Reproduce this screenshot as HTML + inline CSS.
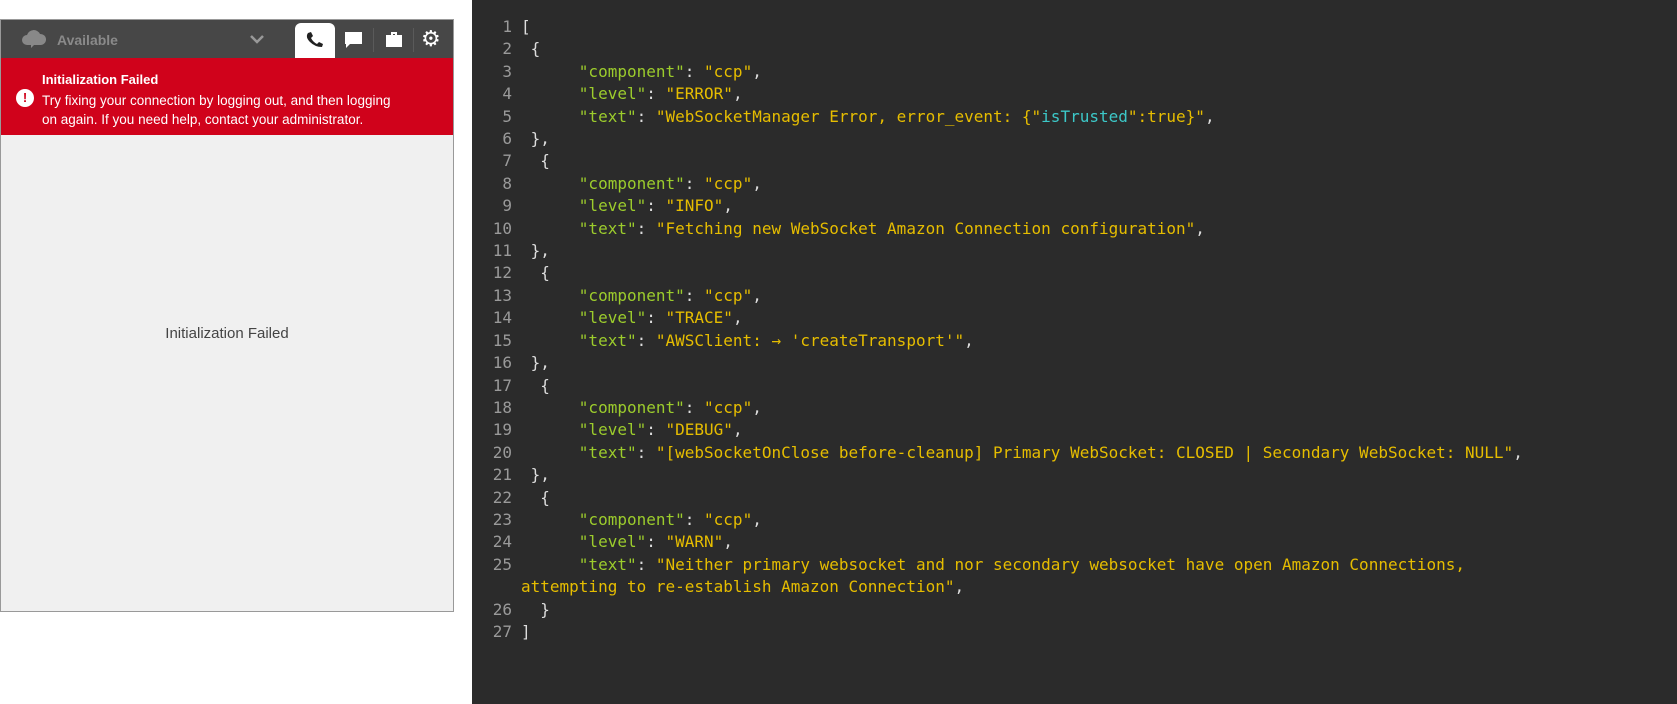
<!DOCTYPE html><html><head><style>
body{margin:0;width:1677px;height:704px;background:#fff;position:relative;overflow:hidden;font-family:"Liberation Sans",sans-serif}
.l{position:absolute;left:0;top:19px;width:452px;height:591px;border:1px solid #999;background:#f0f0f0}
.bar{position:absolute;left:0;top:0;width:452px;height:38px;background:#474747}
.red{position:absolute;left:0;top:38px;width:452px;height:77px;background:#d0021b;color:#fff}
.r{position:absolute;left:472px;top:0;width:1205px;height:704px;background:#2b2b2b}
pre{margin:0;position:absolute;left:0;top:16px;font-family:"DejaVu Sans Mono",monospace;font-size:16px;line-height:22.4px;color:#ddd}
.n{display:inline-block;width:40px;text-align:right;color:#9a9a9a;padding-right:9px}
.k{color:#9ccc2c}.v{color:#e6bd00}.c{color:#3cc8c8}
</style></head><body>
<div class="l">
<div class="bar">
<svg style="position:absolute;left:20px;top:9px" width="26" height="20" viewBox="0 0 26 20"><path d="M6 16a5 5 0 0 1 0-10 7 7 0 0 1 13-1 5 5 0 0 1 1 11H13l-3 3v-3z" fill="#888"/></svg>
<div style="position:absolute;left:56px;top:12px;font-size:14px;color:#8a8a8a;font-weight:bold">Available</div>
<svg style="position:absolute;left:248px;top:13px" width="16" height="12"><path d="M2 3l6 6 6-6" stroke="#999" stroke-width="2.5" fill="none"/></svg>
<div style="position:absolute;left:294px;top:3px;width:40px;height:35px;background:#fff;border-radius:6px 6px 0 0"></div>
<svg style="position:absolute;left:304px;top:10px" width="20" height="20" viewBox="0 0 20 20"><path d="M3 3l3-1 2 4-2 2q2 4 6 6l2-2 4 2-1 3q-7 0-12-5T3 3z" fill="#222"/></svg>
<svg style="position:absolute;left:343px;top:11px" width="20" height="18"><path d="M1 1h17v12H6l-4 4v-4H1z" fill="#fff"/></svg>
<div style="position:absolute;left:372px;top:8px;width:1px;height:24px;background:#5a5a5a"></div>
<svg style="position:absolute;left:383px;top:11px" width="20" height="18"><path d="M7 4V1h6v3h5v12H2V4zM9 4h2V3H9z" fill="#fff"/></svg>
<div style="position:absolute;left:412px;top:8px;width:1px;height:24px;background:#5a5a5a"></div>
<div style="position:absolute;left:420px;top:6px;font-size:22px;color:#fff">⚙</div>
</div>
<div class="red">
<div style="position:absolute;left:15px;top:31px;width:18px;height:18px;border-radius:50%;background:#fff;color:#d0021b;font-weight:bold;font-size:13px;text-align:center;line-height:18px">!</div>
<div style="position:absolute;left:41px;top:14px;font-size:13px;font-weight:bold">Initialization Failed</div>
<div style="position:absolute;left:41px;top:33px;font-size:13.5px;line-height:19px;width:395px">Try fixing your connection by logging out, and then logging<br>on again. If you need help, contact your administrator.</div>
</div>
<div style="position:absolute;left:0;top:305px;width:452px;text-align:center;font-size:15px;color:#444">Initialization Failed</div>
</div>
<div class="r"><pre><span class="n">1</span>[
<span class="n">2</span> {
<span class="n">3</span>      <span class="k">"component"</span>: <span class="v">"ccp"</span>,
<span class="n">4</span>      <span class="k">"level"</span>: <span class="v">"ERROR"</span>,
<span class="n">5</span>      <span class="k">"text"</span>: <span class="v">"WebSocketManager Error, error_event: {"<span class="c">isTrusted</span>":true}"</span>,
<span class="n">6</span> },
<span class="n">7</span>  {
<span class="n">8</span>      <span class="k">"component"</span>: <span class="v">"ccp"</span>,
<span class="n">9</span>      <span class="k">"level"</span>: <span class="v">"INFO"</span>,
<span class="n">10</span>      <span class="k">"text"</span>: <span class="v">"Fetching new WebSocket Amazon Connection configuration"</span>,
<span class="n">11</span> },
<span class="n">12</span>  {
<span class="n">13</span>      <span class="k">"component"</span>: <span class="v">"ccp"</span>,
<span class="n">14</span>      <span class="k">"level"</span>: <span class="v">"TRACE"</span>,
<span class="n">15</span>      <span class="k">"text"</span>: <span class="v">"AWSClient: → 'createTransport'"</span>,
<span class="n">16</span> },
<span class="n">17</span>  {
<span class="n">18</span>      <span class="k">"component"</span>: <span class="v">"ccp"</span>,
<span class="n">19</span>      <span class="k">"level"</span>: <span class="v">"DEBUG"</span>,
<span class="n">20</span>      <span class="k">"text"</span>: <span class="v">"[webSocketOnClose before-cleanup] Primary WebSocket: CLOSED | Secondary WebSocket: NULL"</span>,
<span class="n">21</span> },
<span class="n">22</span>  {
<span class="n">23</span>      <span class="k">"component"</span>: <span class="v">"ccp"</span>,
<span class="n">24</span>      <span class="k">"level"</span>: <span class="v">"WARN"</span>,
<span class="n">25</span>      <span class="k">"text"</span>: <span class="v">"Neither primary websocket and nor secondary websocket have open Amazon Connections,</span>
<span class="n"></span><span class="v">attempting to re-establish Amazon Connection"</span>,
<span class="n">26</span>  }
<span class="n">27</span>]</pre></div>
</body></html>
